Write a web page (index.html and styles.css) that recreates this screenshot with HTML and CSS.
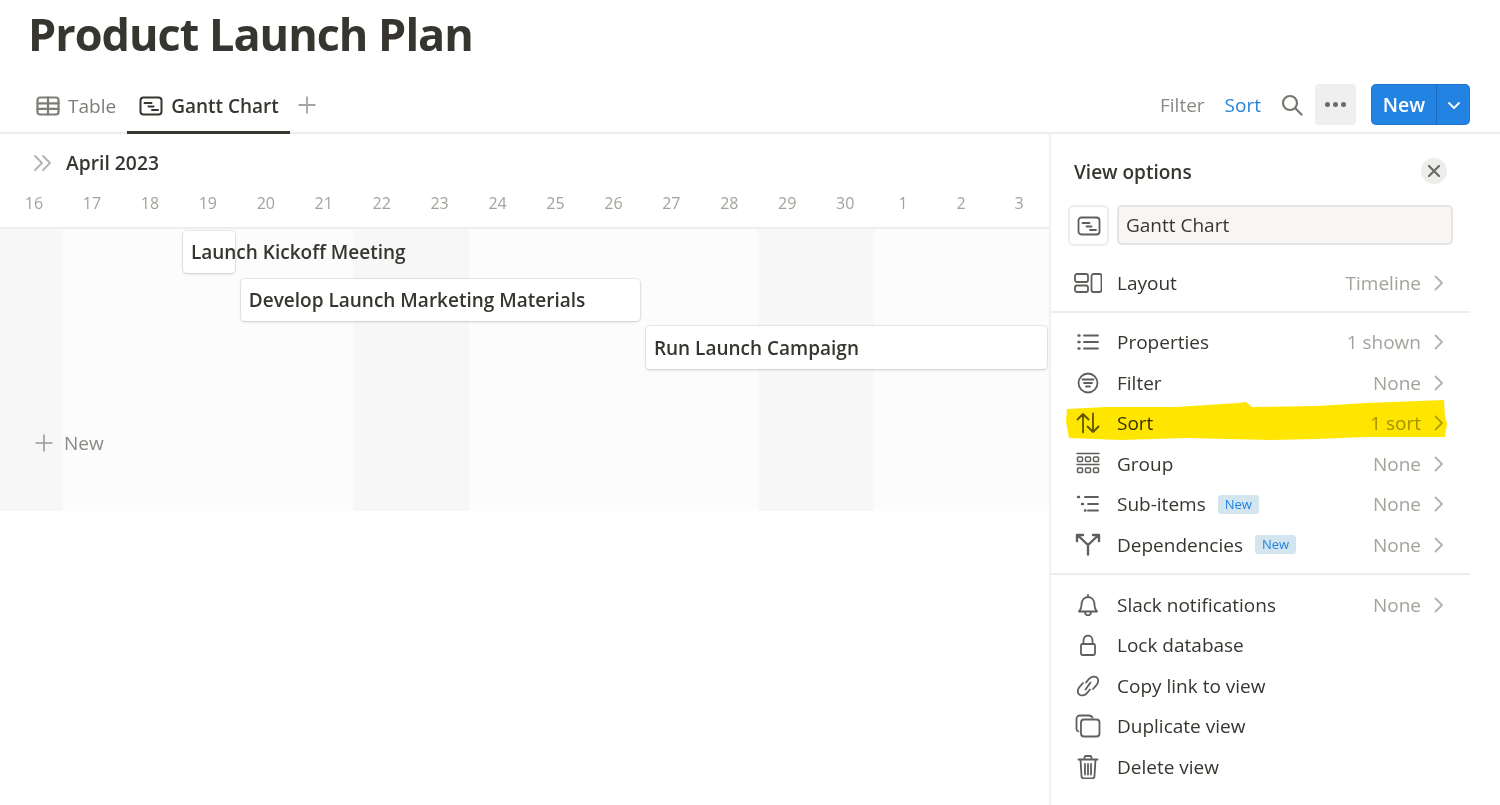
FILE: index.html
```html
<!DOCTYPE html>
<html lang="en">
<head>
<meta charset="utf-8">
<title>Product Launch Plan</title>
<link rel="stylesheet" href="styles.css">
</head>
<body>
<div class="page">
  <h1 class="title">Product Launch Plan</h1>
  <div class="toolbar">
    <div class="tabs">
      <div class="tab">
        <svg class="ico" width="24" height="24" viewBox="0 0 24 24"><rect x="1.500" y="3.500" width="21" height="17" rx="2.500"/><path d="M1.500 9.300h21M1.500 14.800h21M12 3.500V20.500"/></svg>
        <span>Table</span>
      </div>
      <div class="tab active">
        <svg class="ico dark" width="24" height="24" viewBox="0 0 24 24"><rect x="1.500" y="3.500" width="21" height="17" rx="3"/><path d="M5.500 9h7M9.500 12.500h5M13 16h6"/></svg>
        <span>Gantt Chart</span>
      </div>
      <svg class="add" width="20" height="20" viewBox="0 0 20 20"><path d="M10 1.500v17M1.500 10h17"/></svg>
    </div>
    <div class="actions">
      <span class="act">Filter</span>
      <span class="act blue">Sort</span>
      <svg class="search" width="22" height="22" viewBox="0 0 22 22"><circle cx="9" cy="9" r="7"/><path d="M14 14l6.500 6.500"/></svg>
      <div class="more"><i></i><i></i><i></i></div>
      <div class="newbtn">
        <span class="newlabel">New</span>
        <span class="newcaret"><svg width="14" height="14" viewBox="0 0 14 14"><path d="M2 5l5 5 5-5"/></svg></span>
      </div>
    </div>
  </div>
  <div class="main">
    <section class="timeline">
      <div class="month">
        <svg class="dbl" width="20" height="18" viewBox="0 0 20 18"><path d="M2 2l7 7-7 7M10 2l7 7-7 7"/></svg>
        <span>April 2023</span>
      </div>
      <div class="days">
        <span class="first">16</span><span>17</span><span>18</span><span>19</span><span>20</span><span>21</span><span>22</span><span>23</span><span>24</span><span>25</span><span>26</span><span>27</span><span>28</span><span>29</span><span>30</span><span>1</span><span>2</span><span>3</span>
      </div>
      <div class="body">
        <div class="shade s1"></div>
        <div class="shade s2"></div>
        <div class="shade s3"></div>
        <div class="bar b1"><span>Launch Kickoff Meeting</span></div>
        <div class="bar b2"><span>Develop Launch Marketing Materials</span></div>
        <div class="bar b3"><span>Run Launch Campaign</span></div>
        <div class="addnew">
          <svg width="18" height="18" viewBox="0 0 18 18"><path d="M9 .5v17M.5 9h17"/></svg>
          <span>New</span>
        </div>
      </div>
    </section>
    <aside class="panel">
      <div class="phead">
        <span class="ptitle">View options</span>
        <span class="close"><svg width="12" height="12" viewBox="0 0 12 12"><path d="M1 1l10 10M11 1L1 11"/></svg></span>
      </div>
      <div class="namerow">
        <span class="iconbox"><svg class="ico" width="24" height="24" viewBox="0 0 24 24"><rect x="1.500" y="3.500" width="21" height="17" rx="3"/><path d="M5.500 9h7M9.500 12.500h5M13 16h6"/></svg></span>
        <span class="nameinput">Gantt Chart</span>
      </div>
      <div class="group first-group">
        <div class="row">
          <svg class="ico" width="28" height="24" viewBox="0 0 28 24"><rect x="1" y="3" width="13" height="8" rx="2"/><rect x="1" y="14.500" width="13" height="6.500" rx="2"/><rect x="17.500" y="3" width="10" height="18" rx="2"/></svg>
          <span class="label">Layout</span><span class="val">Timeline</span><svg class="chev" width="10" height="16" viewBox="0 0 10 16"><path d="M1.500 1.500L8 8l-6.500 6.500"/></svg>
        </div>
      </div>
      <div class="group">
        <div class="row">
          <svg class="ico" width="28" height="24" viewBox="0 0 28 24"><path d="M10 5.500h14M10 12h14M10 18.500h14"/><path class="dots" d="M4.500 5.500h1M4.500 12h1M4.500 18.500h1"/></svg>
          <span class="label">Properties</span><span class="val">1 shown</span><svg class="chev" width="10" height="16" viewBox="0 0 10 16"><path d="M1.500 1.500L8 8l-6.500 6.500"/></svg>
        </div>
        <div class="row">
          <svg class="ico" width="28" height="24" viewBox="0 0 28 24"><circle cx="14" cy="12" r="9.500"/><path d="M8.500 8.500h11M10 12h8M12 15.500h4"/></svg>
          <span class="label">Filter</span><span class="val">None</span><svg class="chev" width="10" height="16" viewBox="0 0 10 16"><path d="M1.500 1.500L8 8l-6.500 6.500"/></svg>
        </div>
        <div class="row sort">
          <svg class="highlight" width="381" height="42" viewBox="0 0 381 42"><path d="M1 9L40 7 110 7 172 3 180 2 186 7 250 6 300 3 378 0 379 16 381 24 379 37 300 37 250 39 205 40 120 38 55 40 3 38 0 22Z"/></svg>
          <svg class="ico" width="28" height="24" viewBox="0 0 28 24"><path d="M9 21.500V3M3.500 8.500L9 3l5.500 5.500M19 2.500V21M13.500 15.500L19 21l5.500-5.500"/></svg>
          <span class="label">Sort</span><span class="val">1 sort</span><svg class="chev" width="10" height="16" viewBox="0 0 10 16"><path d="M1.500 1.500L8 8l-6.500 6.500"/></svg>
        </div>
        <div class="row">
          <svg class="ico thin" width="28" height="24" viewBox="0 0 28 24"><path d="M3 1.500h22M3 12.500h22"/><rect x="3.500" y="5" width="5" height="4.500" rx="1"/><rect x="11.500" y="5" width="5" height="4.500" rx="1"/><rect x="19.500" y="5" width="5" height="4.500" rx="1"/><rect x="3.500" y="16" width="5" height="4.500" rx="1"/><rect x="11.500" y="16" width="5" height="4.500" rx="1"/><rect x="19.500" y="16" width="5" height="4.500" rx="1"/></svg>
          <span class="label">Group</span><span class="val">None</span><svg class="chev" width="10" height="16" viewBox="0 0 10 16"><path d="M1.500 1.500L8 8l-6.500 6.500"/></svg>
        </div>
        <div class="row">
          <svg class="ico" width="28" height="24" viewBox="0 0 28 24"><path d="M11 5h13M14 12h10M14 18.500h10"/><path class="dots" d="M4 5h1M8 12h1M11 18.500h.5"/></svg>
          <span class="label">Sub-items</span><span class="badge">New</span><span class="val">None</span><svg class="chev" width="10" height="16" viewBox="0 0 10 16"><path d="M1.500 1.500L8 8l-6.500 6.500"/></svg>
        </div>
        <div class="row">
          <svg class="ico bold" width="28" height="24" viewBox="0 0 28 24"><path d="M14 21.500V12L4.500 3M14 12l9.500-9M3 2h6M3 2v6M25 2h-6M25 2v6"/></svg>
          <span class="label">Dependencies</span><span class="badge">New</span><span class="val">None</span><svg class="chev" width="10" height="16" viewBox="0 0 10 16"><path d="M1.500 1.500L8 8l-6.500 6.500"/></svg>
        </div>
      </div>
      <div class="group">
        <div class="row">
          <svg class="ico" width="28" height="24" viewBox="0 0 28 24"><path d="M5 18.500c2-2 2.500-3 2.500-6.500 0-4.500 2.500-8 6.500-8s6.500 3.500 6.500 8c0 3.500.5 4.500 2.500 6.500ZM11 18.500c0 5 6 5 6 0M14 4V2"/></svg>
          <span class="label">Slack notifications</span><span class="val">None</span><svg class="chev" width="10" height="16" viewBox="0 0 10 16"><path d="M1.500 1.500L8 8l-6.500 6.500"/></svg>
        </div>
        <div class="row">
          <svg class="ico" width="28" height="24" viewBox="0 0 28 24"><rect x="7" y="11" width="14" height="11" rx="1.500"/><path d="M9.500 11V7.500c0-6.500 9-6.500 9 0V11"/></svg>
          <span class="label">Lock database</span>
        </div>
        <div class="row">
          <svg class="ico" width="28" height="24" viewBox="0 0 28 24"><path d="M12 8.500l2.800-3.300c2.500-3 6.200-3.400 8.200-1.500s1.500 5.500-1 8L19 15M16 15.500l-2.800 3.300c-2.500 3-6.200 3.400-8.200 1.500s-1.500-5.500 1-8L9 9M11.500 15.500l5-7"/></svg>
          <span class="label">Copy link to view</span>
        </div>
        <div class="row">
          <svg class="ico" width="28" height="24" viewBox="0 0 28 24"><rect x="7" y="5.500" width="18.500" height="17" rx="3"/><path d="M4.500 17.500C3 17 2.500 16 2.500 15V5c0-2 1.300-3.500 3.500-3.500h9c1.500 0 2.500.5 3.500 2"/></svg>
          <span class="label">Duplicate view</span>
        </div>
        <div class="row">
          <svg class="ico" width="28" height="24" viewBox="0 0 28 24"><path d="M4.500 4.500h19M10.500 4.500V2.500c0-1 .5-1.500 1.500-1.500h4c1 0 1.500.5 1.500 1.500v2M6.500 4.500l1 16.500c0 1.500 1 2.300 2.300 2.300h8.400c1.300 0 2.300-.8 2.300-2.300l1-16.500M11 9v10.500M14 9v10.500M17 9v10.500"/></svg>
          <span class="label">Delete view</span>
        </div>
      </div>
    </aside>
  </div>
</div>
</body>
</html>
```
FILE: styles.css
```css
* { box-sizing: border-box; }
html, body { margin: 0; padding: 0; background: #fff; }
.page {
  width: 1500px;
  height: 805px;
  overflow: hidden;
  display: flex;
  flex-direction: column;
  font-family: "Open Sans", "Noto Sans", sans-serif;
  color: #37352f;
}
.title {
  margin: 0;
  height: 84px;
  padding: 3px 0 0 28px;
  font-size: 45px;
  letter-spacing: -1px;
  line-height: 62px;
  font-weight: 700;
  color: #37352f;
}
svg { fill: none; display: block; flex: none; }
.ico { stroke: #5f5e5a; stroke-width: 1.800; stroke-linecap: round; stroke-linejoin: round; }
.ico.dark { stroke: #37352f; stroke-width: 2; }
.ico.thin { stroke-width: 1.500; }
.ico.bold { stroke-width: 2.400; }
.ico .dots { stroke-width: 2.400; }

.toolbar {
  height: 50px;
  border-bottom: 2px solid #ededec;
  display: flex;
  justify-content: space-between;
}
.tabs { display: flex; align-items: flex-start; padding-left: 26px; }
.tab {
  height: 50px;
  display: flex;
  align-items: center;
  gap: 8px;
  padding: 0 11px 6px 10px;
  font-size: 19px;
  color: #7d7c78;
  font-weight: 500;
}
.tab .ico { stroke: #7d7c78; stroke-width: 2.200; }
.tab.active {
  color: #37352f;
  font-weight: 600;
  border-bottom: 3px solid #37352f;
  padding: 0 11px 3px 12px;
}
.tab.active .ico { stroke: #37352f; stroke-width: 2; }
.add { margin: 11px 0 0 7px; stroke: #a5a4a0; stroke-width: 1.800; }
.actions {
  display: flex;
  align-items: flex-start;
  padding: 0 30px 0 0;
  font-size: 19px;
}
.act { margin-top: 8px; line-height: 26px; color: #8a8985; }
.act.blue { color: #2383e2; margin-left: 20px; }
.search { margin: 10px 0 0 20px; stroke: #77766f; stroke-width: 2.200; stroke-linecap: round; }
.more {
  width: 41px;
  height: 41px;
  margin-left: 12px;
  background: #efefef;
  border-radius: 4px;
  display: flex;
  align-items: center;
  justify-content: center;
  gap: 3px;
}
.more i { width: 5px; height: 5px; border-radius: 50%; background: #6b6a65; }
.newbtn {
  width: 99px;
  height: 41px;
  margin-left: 15px;
  display: flex;
  background: #2383e2;
  border-radius: 5px;
  color: #fff;
  box-shadow: inset 0 0 0 1px rgba(15, 15, 15, .1);
}
.newlabel {
  width: 66px;
  padding-left: 1px;
  text-align: center;
  font-weight: 600;
  line-height: 41px;
  font-size: 19.500px;
  border-right: 1px solid #1b6bbd;
}
.newcaret { flex: 1; display: flex; align-items: center; justify-content: center; }
.newcaret svg { stroke: #fff; stroke-width: 1.800; stroke-linecap: round; stroke-linejoin: round; }

.main { flex: 1; display: flex; min-height: 0; }
.timeline { width: 1049px; flex: none; overflow: hidden; }
.month {
  height: 54px;
  display: flex;
  align-items: center;
  gap: 13px;
  padding: 3px 0 0 33px;
  font-size: 19.300px;
  font-weight: 600;
  color: #37352f;
}
.dbl { stroke: #b3b2af; stroke-width: 1.800; stroke-linecap: round; stroke-linejoin: round; }
.days, .body {
  display: grid;
  grid-template-columns: 63px repeat(17, 57.950px) 1fr;
}
.days {
  height: 41px;
  border-bottom: 2px solid #ededec;
  font-size: 16px;
  line-height: 30px;
  text-align: center;
  color: #a5a29c;
}
.days .first { padding-left: 5px; }
.body {
  height: 282px;
  background: #fcfcfc;
  grid-template-rows: 2px repeat(3, 47.500px) 46px 46px 1fr;
  font-size: 19px;
  font-weight: 600;
}
.shade { background: #f7f7f7; grid-row: 1 / -1; }
.s1 { grid-column: 1 / 2; }
.s2 { grid-column: 7 / 9; }
.s3 { grid-column: 14 / 16; }
.bar {
  height: 42px;
  background: #fff;
  border-radius: 4px;
  box-shadow: 0 0 0 1px rgba(15,15,15,.07), 0 1px 3px rgba(15,15,15,.14);
  padding-left: 8px;
  display: flex;
  align-items: center;
  white-space: nowrap;
}
.b1 { grid-row: 2; grid-column: 4 / 5; margin-left: 4px; margin-right: 2px; }
.b2 { grid-row: 3; grid-column: 5 / 12; margin-left: 4px; margin-right: 2px; }
.b3 { grid-row: 4; grid-column: 12 / 19; margin: 0 1px 0 4px; height: 43px; padding-left: 7.500px; }
.addnew {
  grid-row: 6;
  grid-column: 1 / 4;
  display: flex;
  align-items: center;
  gap: 11px;
  padding-left: 35px;
  font-weight: 400;
  color: #8a8985;
}
.addnew svg { stroke: #9b9a97; stroke-width: 1.600; }

.panel {
  flex: 1;
  border-left: 2px solid #f1f1f0;
  padding: 0 30px 0 0;
  font-size: 19px;
}
.phead {
  height: 71px;
  padding: 3px 23px 0 23px;
  display: flex;
  align-items: center;
  justify-content: space-between;
  font-weight: 600;
}
.ptitle { font-size: 19px; margin-top: 2px; }
.close {
  width: 26px; height: 26px;
  border-radius: 50%;
  background: #ededec;
  display: flex; align-items: center; justify-content: center;
}
.close svg { stroke: #6b6a65; stroke-width: 2.200; stroke-linecap: round; }
.namerow { display: flex; gap: 8px; padding: 0 17px; height: 40px; }
.iconbox {
  width: 41px; height: 41px;
  border: 2px solid #ededec;
  border-radius: 6px;
  display: flex; align-items: center; justify-content: center;
}
.nameinput {
  flex: 1;
  height: 40px;
  background: #f7f6f4;
  border: 2px solid #e6e5e3;
  border-radius: 5px;
  padding-left: 7px;
  line-height: 36px;
  color: #37352f;
}
.group { padding: 9.500px 0 8px; border-bottom: 2px solid #ededec; }
.group:last-child { border-bottom: 0; }
.first-group { padding: 18px 0 7px; }
.row {
  position: relative;
  height: 40.500px;
  display: flex;
  align-items: center;
  padding: 0 26px 0 23px;
  color: #37352f;
}
.row > .ico { margin-right: 15px; }
.label { font-weight: 400; }
.val { margin-left: auto; color: #a5a29c; }
.chev { margin-left: 13px; stroke: #b3b2af; stroke-width: 1.800; stroke-linecap: round; stroke-linejoin: round; }
.badge {
  margin-left: 12px;
  background: #d3e5ef;
  color: #2383e2;
  font-size: 13px;
  line-height: 19px;
  padding: 0 7px;
  border-radius: 3px;
}
.highlight {
  position: absolute;
  left: 15px;
  top: -3px;
  fill: #ffe600;
  mix-blend-mode: multiply;
}
```
